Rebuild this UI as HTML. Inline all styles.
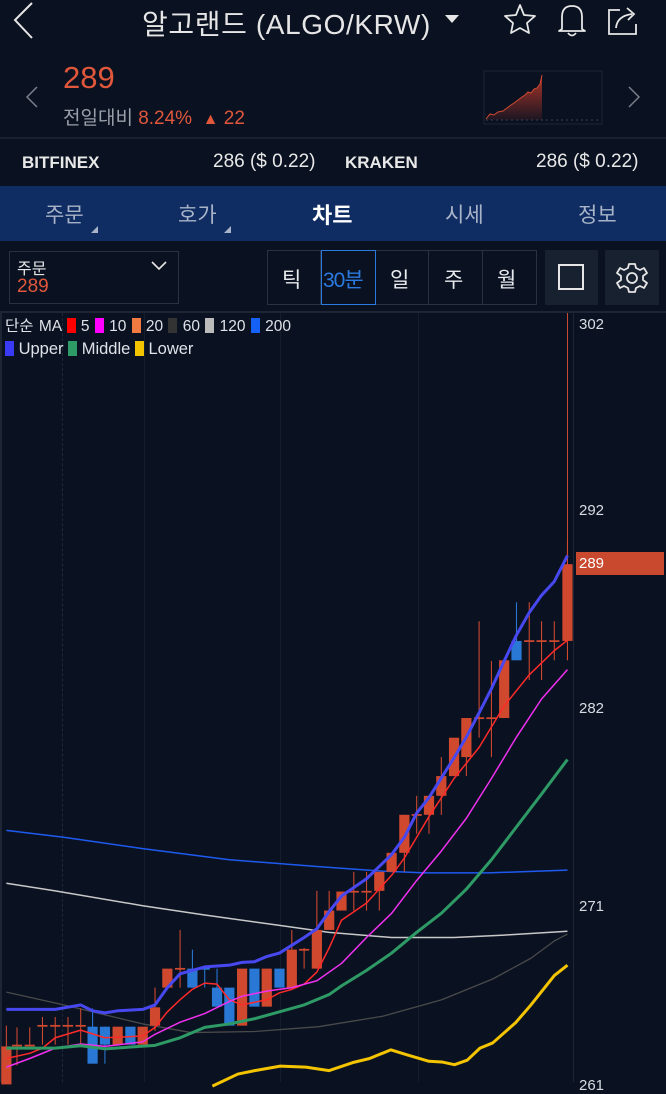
<!DOCTYPE html>
<html><head><meta charset="utf-8"><style>
*{margin:0;padding:0;box-sizing:border-box}
body{width:666px;height:1082px;background:#0a1221;font-family:"Liberation Sans","Noto Sans CJK KR",sans-serif;color:#e8eaee;position:relative;overflow:hidden}
.a{position:absolute;white-space:nowrap}
.or{color:#e0573b}
.sw{display:inline-block;width:9px;height:15px;vertical-align:-2px}
</style></head><body>
<!-- header -->
<svg class="a" style="left:0;top:0" width="666" height="44">
<polyline points="32,3 15,20 32,38" fill="none" stroke="#e6e6e6" stroke-width="2"/>
<polygon points="445,15 459,15 452,23" fill="#e6e6e6"/>
<polygon points="520,5 524,15 535,16 527,23 529,33 520,28 511,33 513,23 505,16 516,15" fill="none" stroke="#e6e6e6" stroke-width="1.8" stroke-linejoin="round"/>
<path d="M562,29 L562,17 Q562,6 572,6 Q582,6 582,17 L582,29 L585,31 L559,31 Z" fill="none" stroke="#e6e6e6" stroke-width="1.8" stroke-linejoin="round"/>
<path d="M568,33 Q572,38 576,33" fill="none" stroke="#e6e6e6" stroke-width="1.8"/>
<path d="M620,10 L609,10 L609,34 L636,34 L636,24" fill="none" stroke="#e6e6e6" stroke-width="1.8"/>
<path d="M616,28 Q617,16 632,14 M627,8 L634,14 L628,20" fill="none" stroke="#e6e6e6" stroke-width="1.8"/>
</svg>
<div class="a" style="left:142px;top:3px;font-size:28px;color:#e6e6e6;letter-spacing:0.6px">알고랜드 (ALGO/KRW)</div>
<svg class="a" style="left:0;top:70px" width="666" height="60">
<polyline points="37,17 27,27 37,37" fill="none" stroke="#7a808a" stroke-width="1.5"/>
<polyline points="629,17 639,27 629,37" fill="none" stroke="#7a808a" stroke-width="1.5"/>
<rect x="484" y="1" width="118" height="53" fill="none" stroke="#1e2738" stroke-width="1"/>
<defs><linearGradient id="g" x1="0" y1="0" x2="0" y2="1"><stop offset="0" stop-color="#c03a2a" stop-opacity=".9"/><stop offset="1" stop-color="#c03a2a" stop-opacity=".1"/></linearGradient></defs>
<path d="M486,49 L490,44 L494,45 L498,42 L503,41 L507,38 L511,35 L514,33 L518,30 L522,27 L525,25 L528,22 L531,23 L534,19 L537,18 L540,14 L542,5 L542,50 L486,50 Z" fill="url(#g)"/>
<polyline points="486,49 490,44 494,45 498,42 503,41 507,38 511,35 514,33 518,30 522,27 525,25 528,22 531,23 534,19 537,18 540,14 542,5" fill="none" stroke="#d24a33" stroke-width="1"/>
<line x1="486" y1="50" x2="600" y2="50" stroke="#3a4050" stroke-dasharray="2,3"/>
</svg>
<div class="a or" style="left:63px;top:60px;font-size:31px">289</div>
<div class="a" style="left:63px;top:103px;font-size:19px;color:#9aa0aa">전일대비 <span class="or">8.24%</span> &nbsp;<span class="or" style="font-size:16px">▲</span> <span class="or">22</span></div>
<div class="a" style="left:0;top:137px;width:666px;height:2px;background:#1a2232"></div>
<div class="a" style="left:22px;top:153px;font-size:17px;font-weight:bold;color:#e8e8e8">BITFINEX</div>
<div class="a" style="left:213px;top:151px;font-size:19px;color:#e8e8e8">286 ($ 0.22)</div>
<div class="a" style="left:345px;top:153px;font-size:17px;font-weight:bold;color:#e8e8e8">KRAKEN</div>
<div class="a" style="left:536px;top:151px;font-size:19px;color:#e8e8e8">286 ($ 0.22)</div>
<!-- tabs -->
<div class="a" style="left:0;top:186px;width:666px;height:55px;background:#0f2c63"></div>
<div class="a" style="left:45px;top:199px;font-size:21px;color:#a9b4c8">주문</div>
<div class="a" style="left:178px;top:199px;font-size:21px;color:#a9b4c8">호가</div>
<div class="a" style="left:312px;top:198px;font-size:22px;font-weight:bold;color:#fff">차트</div>
<div class="a" style="left:445px;top:199px;font-size:21px;color:#a9b4c8">시세</div>
<div class="a" style="left:578px;top:199px;font-size:21px;color:#a9b4c8">정보</div>
<svg class="a" style="left:0;top:186px" width="666" height="55"><polygon points="98,40 98,47 91,47" fill="#a9b4c8"/><polygon points="231,40 231,47 224,47" fill="#a9b4c8"/></svg>
<!-- toolbar -->
<div class="a" style="left:9px;top:251px;width:170px;height:53px;border:1px solid #2a3242"></div>
<div class="a" style="left:17px;top:255px;font-size:16px;color:#e6e6e6">주문</div>
<div class="a or" style="left:17px;top:276px;font-size:19px">289</div>
<svg class="a" style="left:150px;top:260px" width="20" height="12"><polyline points="2,2 9,9 16,2" fill="none" stroke="#e6e6e6" stroke-width="1.6"/></svg>
<div class="a" style="left:267px;top:250px;width:270px;height:55px;border:1px solid #2a3242"></div>
<div class="a" style="left:320px;top:250px;width:1px;height:55px;background:#2a3242"></div>
<div class="a" style="left:428px;top:250px;width:1px;height:55px;background:#2a3242"></div>
<div class="a" style="left:482px;top:250px;width:1px;height:55px;background:#2a3242"></div>
<div class="a" style="left:321px;top:250px;width:55px;height:55px;border:1.5px solid #2a7ae0"></div>
<div class="a" style="left:282px;top:264px;font-size:21px">틱</div>
<div class="a" style="left:323px;top:264px;font-size:21px;color:#2a7ae0;letter-spacing:-1px">30분</div>
<div class="a" style="left:390px;top:264px;font-size:21px">일</div>
<div class="a" style="left:444px;top:264px;font-size:21px">주</div>
<div class="a" style="left:497px;top:264px;font-size:21px">월</div>
<div class="a" style="left:545px;top:250px;width:53px;height:55px;background:#182130"></div>
<div class="a" style="left:558px;top:264px;width:26px;height:26px;border:2px solid #e6e6e6"></div>
<div class="a" style="left:605px;top:250px;width:54px;height:55px;background:#182130"></div>
<svg class="a" style="left:615px;top:261px" width="34" height="34"><path d="M14,3 L20,3 L21,7 L25,9 L29,7 L32,12 L28,15 L28,19 L32,22 L29,27 L25,25 L21,27 L20,31 L14,31 L13,27 L9,25 L5,27 L2,22 L6,19 L6,15 L2,12 L5,7 L9,9 L13,7 Z" fill="none" stroke="#e6e6e6" stroke-width="1.8" stroke-linejoin="round"/><circle cx="17" cy="17" r="5" fill="none" stroke="#e6e6e6" stroke-width="1.8"/></svg>
<!-- chart frame -->
<div class="a" style="left:0;top:311px;width:666px;height:2px;background:#1e2636"></div>
<div class="a" style="left:0;top:313px;width:2px;height:769px;background:#1e2636"></div>
<div class="a" style="left:573px;top:313px;width:1px;height:769px;background:#1e2636"></div>
<div class="a" style="left:62px;top:313px;width:0;height:769px;border-left:1px dashed #1f2838"></div>
<div class="a" style="left:144px;top:313px;width:1px;height:769px;background:#161e2c"></div>
<div class="a" style="left:280px;top:313px;width:1px;height:769px;background:#161e2c"></div>
<div class="a" style="left:418px;top:313px;width:1px;height:769px;background:#161e2c"></div>
<div class="a" style="left:567px;top:313px;width:1px;height:250px;background:#c8492e"></div>
<div class="a" style="left:5px;top:314px;font-size:15.5px;color:#dfe2e8;word-spacing:1px">단순 MA <span class="sw" style="background:#f00"></span> 5 <span class="sw" style="background:#f0f"></span> 10 <span class="sw" style="background:#f07a40"></span> 20 <span class="sw" style="background:#333"></span> 60 <span class="sw" style="background:#bbb"></span> 120 <span class="sw" style="background:#1560f5"></span> 200</div>
<div class="a" style="left:5px;top:340px;font-size:16.5px;color:#dfe2e8"><span class="sw" style="background:#3a3af5"></span> Upper <span class="sw" style="background:#2e9a66"></span> Middle <span class="sw" style="background:#f5c400"></span> Lower</div>
<div class="a" style="left:579px;top:316px;font-size:15px;color:#d8dce2">302</div>
<div class="a" style="left:579px;top:502px;font-size:15px;color:#d8dce2">292</div>
<div class="a" style="left:576px;top:552px;width:88px;height:23px;background:#c8492e"></div>
<div class="a" style="left:579px;top:555px;font-size:15px;color:#fff">289</div>
<div class="a" style="left:579px;top:700px;font-size:15px;color:#d8dce2">282</div>
<div class="a" style="left:579px;top:898px;font-size:15px;color:#d8dce2">271</div>
<div class="a" style="left:579px;top:1077px;font-size:15px;color:#d8dce2">261</div>
<svg class="a" style="left:0;top:540px;overflow:visible" width="666" height="542" viewBox="0 0 1568 1568" preserveAspectRatio="none">
<g fill="none" stroke-linejoin="round">
<polyline vector-effect="non-scaling-stroke" stroke="#1f5af0" stroke-width="1.5" points="15,840 150,860 336,893 540,925 750,945 900,958 1000,963 1150,963 1336,955"/>
<polyline vector-effect="non-scaling-stroke" stroke="#c8c8c8" stroke-width="1.5" points="15,993 130,1015 336,1058 482,1085 658,1115 775,1135 922,1150 1069,1150 1187,1143 1336,1132"/>
<polyline vector-effect="non-scaling-stroke" stroke="#4a4a4a" stroke-width="1.3" points="15,1308 150,1345 336,1400 450,1425 600,1422 750,1408 900,1378 1040,1330 1160,1270 1250,1210 1305,1160 1336,1140"/>
<polyline vector-effect="non-scaling-stroke" stroke="#f5c400" stroke-width="3" points="500,1580 560,1545 600,1535 660,1522 720,1525 775,1535 830,1512 870,1500 920,1475 960,1490 1010,1508 1040,1510 1070,1518 1100,1505 1130,1470 1160,1455 1215,1395 1250,1345 1305,1260 1336,1230"/>
</g>
<g stroke="#d0492f" stroke-width="2.5">
<line x1="15" y1="1405" x2="15" y2="1568"/><line x1="40" y1="1410" x2="40" y2="1520"/><line x1="70" y1="1410" x2="70" y2="1465"/><line x1="100" y1="1380" x2="100" y2="1460"/><line x1="130" y1="1380" x2="130" y2="1460"/><line x1="160" y1="1380" x2="160" y2="1460"/><line x1="190" y1="1355" x2="190" y2="1460"/>
<line x1="365" y1="1295" x2="365" y2="1420"/><line x1="424" y1="1128" x2="424" y2="1295"/><line x1="687" y1="1128" x2="687" y2="1295"/><line x1="716" y1="1180" x2="716" y2="1240"/><line x1="746" y1="1015" x2="746" y2="1240"/><line x1="775" y1="1015" x2="775" y2="1128"/><line x1="833" y1="960" x2="833" y2="1072"/><line x1="863" y1="960" x2="863" y2="1072"/><line x1="893" y1="960" x2="893" y2="1072"/><line x1="952" y1="795" x2="952" y2="960"/><line x1="981" y1="740" x2="981" y2="850"/><line x1="1010" y1="740" x2="1010" y2="850"/><line x1="1039" y1="628" x2="1039" y2="795"/><line x1="1098" y1="515" x2="1098" y2="683"/><line x1="1128" y1="235" x2="1128" y2="572"/><line x1="1157" y1="350" x2="1157" y2="628"/><line x1="1246" y1="180" x2="1246" y2="405"/><line x1="1275" y1="235" x2="1275" y2="405"/><line x1="1305" y1="235" x2="1305" y2="348"/><line x1="1336" y1="0" x2="1336" y2="348"/>
</g>
<g stroke="#2a78d6" stroke-width="2.5">
<line x1="218" y1="1355" x2="218" y2="1515"/><line x1="247" y1="1408" x2="247" y2="1515"/><line x1="453" y1="1185" x2="453" y2="1295"/><line x1="482" y1="1240" x2="482" y2="1295"/><line x1="511" y1="1240" x2="511" y2="1350"/><line x1="1216" y1="180" x2="1216" y2="348"/>
</g>
<g fill="#d0492f">
<rect x="3" y="1465" width="24" height="110"/><rect x="28" y="1460" width="24" height="5"/><rect x="58" y="1460" width="24" height="5"/><rect x="88" y="1403" width="24" height="5"/><rect x="118" y="1403" width="24" height="5"/><rect x="148" y="1403" width="24" height="5"/><rect x="178" y="1403" width="24" height="5"/>
<rect x="265" y="1408" width="24" height="52"/><rect x="324" y="1408" width="24" height="52"/><rect x="353" y="1352" width="24" height="53"/><rect x="382" y="1240" width="24" height="55"/><rect x="412" y="1238" width="24" height="5"/>
<rect x="558" y="1240" width="24" height="165"/><rect x="616" y="1240" width="24" height="110"/><rect x="675" y="1185" width="24" height="110"/><rect x="704" y="1183" width="24" height="5"/><rect x="734" y="1128" width="24" height="112"/><rect x="763" y="1072" width="24" height="56"/><rect x="792" y="1017" width="24" height="55"/><rect x="821" y="1015" width="24" height="5"/><rect x="851" y="1015" width="24" height="5"/><rect x="881" y="960" width="24" height="55"/><rect x="910" y="905" width="24" height="55"/><rect x="940" y="795" width="24" height="110"/><rect x="969" y="793" width="24" height="5"/><rect x="998" y="740" width="24" height="55"/><rect x="1027" y="683" width="24" height="57"/><rect x="1057" y="572" width="24" height="111"/><rect x="1086" y="515" width="24" height="113"/><rect x="1116" y="513" width="24" height="5"/><rect x="1145" y="513" width="24" height="5"/><rect x="1175" y="348" width="24" height="167"/><rect x="1234" y="290" width="24" height="5"/><rect x="1263" y="290" width="24" height="5"/><rect x="1293" y="290" width="24" height="5"/><rect x="1324" y="70" width="24" height="222"/>
</g>
<g fill="#2a78d6">
<rect x="206" y="1408" width="24" height="107"/><rect x="235" y="1408" width="24" height="52"/><rect x="295" y="1408" width="24" height="52"/><rect x="441" y="1240" width="24" height="55"/><rect x="470" y="1238" width="24" height="5"/><rect x="499" y="1295" width="24" height="55"/><rect x="528" y="1295" width="24" height="110"/><rect x="587" y="1240" width="24" height="110"/><rect x="646" y="1240" width="24" height="55"/><rect x="1204" y="292" width="24" height="56"/>
</g>
<g fill="none" stroke-linejoin="round">
<polyline vector-effect="non-scaling-stroke" stroke="#ff2a2a" stroke-width="1.5" points="15,1500 70,1485 100,1470 130,1440 190,1418 247,1440 336,1435 365,1410 394,1365 424,1330 453,1300 482,1282 511,1285 540,1330 570,1345 628,1330 658,1310 687,1300 716,1285 746,1250 775,1180 804,1100 863,1050 922,970 952,920 981,860 1010,800 1069,690 1128,600 1187,480 1246,390 1305,320 1336,290"/>
<polyline vector-effect="non-scaling-stroke" stroke="#f030f0" stroke-width="1.5" points="15,1525 70,1500 130,1470 190,1458 247,1465 336,1452 365,1430 424,1395 482,1370 540,1335 570,1320 628,1305 687,1295 746,1275 804,1225 863,1150 922,1080 981,985 1039,900 1098,805 1157,690 1216,570 1275,460 1336,375"/>
<polyline vector-effect="non-scaling-stroke" stroke="#2e9a66" stroke-width="3" points="15,1470 130,1470 190,1463 247,1472 365,1462 424,1440 482,1410 540,1400 599,1385 658,1365 716,1345 775,1315 804,1290 863,1245 922,1195 981,1135 1039,1080 1098,1010 1157,925 1216,830 1275,735 1336,635"/>
<polyline vector-effect="non-scaling-stroke" stroke="#4848f0" stroke-width="3" points="15,1358 130,1358 190,1345 218,1362 247,1368 277,1362 336,1358 365,1345 394,1295 424,1255 482,1235 540,1230 570,1222 599,1220 628,1205 658,1195 716,1150 746,1125 775,1075 804,1030 863,980 922,910 952,860 981,790 1010,745 1069,630 1098,570 1128,500 1157,430 1187,350 1216,275 1246,210 1275,160 1305,120 1336,45"/>
</g>
</svg>
</body></html>
